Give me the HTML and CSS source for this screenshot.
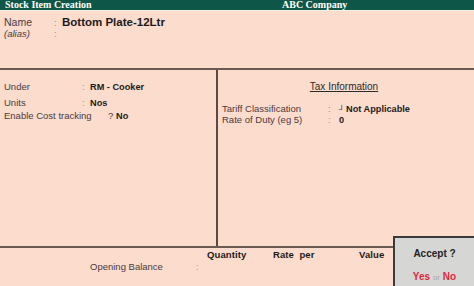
FILE: index.html
```html
<!DOCTYPE html>
<html>
<head>
<meta charset="utf-8">
<link rel="stylesheet" href="styles.css">
</head>
<body>
<div class="screen">
  <div class="titlebar">
    <span class="title-left">Stock Item Creation</span>
    <span class="title-right">ABC Company</span>
  </div>
  <div class="top">
    <div class="row name-row">
      <span class="lbl name-lbl">Name</span>
      <span class="colon name-colon">:</span>
      <span class="val big">Bottom Plate-12Ltr</span>
    </div>
    <div class="row alias-row">
      <span class="lbl name-lbl alias">(alias)</span>
      <span class="colon name-colon">:</span>
    </div>
  </div>
  <div class="mid">
    <div class="left">
      <div class="row r-under">
        <span class="lbl l-lbl">Under</span>
        <span class="colon l-colon">:</span>
        <span class="val">RM - Cooker</span>
      </div>
      <div class="row r-units">
        <span class="lbl l-lbl">Units</span>
        <span class="colon l-colon">:</span>
        <span class="val">Nos</span>
      </div>
      <div class="row r-cost">
        <span class="lbl cost-lbl">Enable Cost tracking</span>
        <span class="q">?</span>
        <span class="val">No</span>
      </div>
    </div>
    <div class="right">
      <div class="tax-title">Tax Information</div>
      <div class="row r-tariff">
        <span class="lbl t-lbl">Tariff Classification</span>
        <span class="colon t-colon">:</span>
        <span class="mark">&#x2518;</span>
        <span class="val">Not Applicable</span>
      </div>
      <div class="row r-rate">
        <span class="lbl t-lbl">Rate of Duty (eg 5)</span>
        <span class="colon t-colon">:</span>
        <span class="val zero">0</span>
      </div>
    </div>
  </div>
  <div class="bottom">
    <div class="cols">
      <span class="c-qty">Quantity</span>
      <span class="c-rate">Rate&nbsp; per</span>
      <span class="c-val">Value</span>
    </div>
    <div class="opening">
      <span class="op-lbl">Opening Balance</span>
      <span class="op-colon">:</span>
    </div>
    <div class="accept">
      <div class="acc-q">Accept ?</div>
      <div class="acc-yn"><span class="red">Yes</span> <span class="or">or</span> <span class="red">No</span></div>
    </div>
  </div>
</div>
</body>
</html>
```
FILE: styles.css
```css
html, body {
  margin: 0;
  padding: 0;
}
body {
  width: 474px;
  height: 286px;
  overflow: hidden;
  background: #fcdccd;
  font-family: "Liberation Sans", Arial, sans-serif;
  font-size: 9.5px;
  color: #4a3a40;
}
.screen {
  width: 474px;
  height: 286px;
  display: flex;
  flex-direction: column;
  position: relative;
}
.titlebar {
  height: 10px;
  background: #0e5647;
  border-bottom: 1px solid #f3efe4;
  display: flex;
  font-family: "Liberation Serif", "Times New Roman", serif;
  font-weight: bold;
  font-size: 10px;
  line-height: 10px;
  color: #ffffff;
}
.title-left {
  padding-left: 5px;
  width: 277px;
}
.top {
  height: 52px;
  border-bottom: 2px solid #6a5a52;
  padding-top: 5px;
}
.row {
  display: flex;
  align-items: baseline;
  white-space: nowrap;
}
.lbl {
  padding-left: 4px;
}
.name-lbl {
  width: 50px;
  font-size: 10.5px;
}
.alias {
  font-style: italic;
  font-size: 9.5px;
}
.name-colon {
  width: 8px;
  color: #9a8a88;
}
.colon {
  color: #9a8a88;
}
.val {
  font-weight: bold;
  color: #1c1a1a;
  font-size: 9.2px;
}
.big {
  font-size: 11.5px;
}
.mid {
  height: 176px;
  display: flex;
}
.left {
  width: 216px;
  border-right: 2px solid #5a4a44;
  padding-top: 11px;
}
.l-lbl {
  width: 78px;
}
.l-colon {
  width: 8px;
}
.r-units {
  margin-top: 5px;
}
.r-cost {
  margin-top: 2px;
}
.cost-lbl {
  width: 104px;
}
.q {
  width: 8px;
  color: #4a3a40;
}
.right {
  flex: 1;
  padding-top: 11px;
}
.tax-title {
  text-align: center;
  text-decoration: underline;
  font-size: 10px;
  color: #2e2a2a;
  padding-right: 4px;
}
.r-tariff {
  margin-top: 11px;
}
.t-lbl {
  width: 106px;
}
.t-colon {
  width: 11px;
}
.mark {
  width: 7px;
  font-size: 8px;
  font-weight: bold;
  color: #1c1a1a;
}
.bottom {
  flex: 1;
  border-top: 2px solid #6a5a52;
  position: relative;
}
.cols {
  display: flex;
  font-weight: bold;
  color: #1c1a1a;
  font-size: 9.5px;
  padding-top: 1px;
  letter-spacing: 0.1px;
}
.c-qty {
  margin-left: 207px;
  width: 66px;
}
.c-rate {
  width: 86px;
}
.opening {
  display: flex;
  margin-top: 1px;
}
.op-lbl {
  margin-left: 90px;
  width: 106px;
}
.op-colon {
  color: #b0a0a0;
}
.accept {
  position: absolute;
  left: 393px;
  top: -12px;
  width: 81px;
  height: 52px;
  box-sizing: border-box;
  background: #d6d6d4;
  border-left: 2px solid #3a3a3a;
  border-top: 2px solid #3a3a3a;
  border-bottom: 2px solid #5a5a5a;
  text-align: center;
}
.acc-q {
  font-weight: bold;
  color: #222;
  font-size: 10px;
  margin-top: 10px;
}
.acc-yn {
  margin-top: 12px;
  font-weight: bold;
  font-size: 10px;
}
.red {
  color: #e0283c;
}
.or {
  color: #a8a8a8;
  font-weight: normal;
  font-size: 8px;
}
```
